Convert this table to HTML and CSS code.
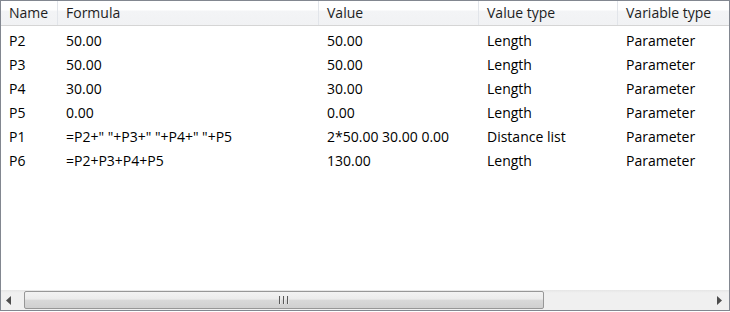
FILE: index.html
```html
<!DOCTYPE html>
<html>
<head>
<meta charset="utf-8">
<link rel="stylesheet" href="styles.css">
</head>
<body>
<div class="frame">
  <div class="grid">
    <div class="head">
      <div class="hc c1">Name</div>
      <div class="hc c2">Formula</div>
      <div class="hc c3">Value</div>
      <div class="hc c4">Value type</div>
      <div class="hc c5">Variable type</div>
    </div>
    <div class="rows">
      <div class="row"><div class="c1">P2</div><div class="c2">50.00</div><div class="c3">50.00</div><div class="c4">Length</div><div class="c5">Parameter</div></div>
      <div class="row"><div class="c1">P3</div><div class="c2">50.00</div><div class="c3">50.00</div><div class="c4">Length</div><div class="c5">Parameter</div></div>
      <div class="row"><div class="c1">P4</div><div class="c2">30.00</div><div class="c3">30.00</div><div class="c4">Length</div><div class="c5">Parameter</div></div>
      <div class="row"><div class="c1">P5</div><div class="c2">0.00</div><div class="c3">0.00</div><div class="c4">Length</div><div class="c5">Parameter</div></div>
      <div class="row"><div class="c1">P1</div><div class="c2">=P2+" "+P3+" "+P4+" "+P5</div><div class="c3">2*50.00 30.00 0.00</div><div class="c4">Distance list</div><div class="c5">Parameter</div></div>
      <div class="row"><div class="c1">P6</div><div class="c2">=P2+P3+P4+P5</div><div class="c3">130.00</div><div class="c4">Length</div><div class="c5">Parameter</div></div>
    </div>
  </div>
  <div class="hscroll">
    <div class="btn left"><svg width="6" height="9" viewBox="0 0 6 9"><path d="M5 0 L0 4.5 L5 9 Z" fill="#4d4d4d"/></svg></div>
    <div class="track">
      <div class="thumb">
        <div class="grip"><span></span><span></span><span></span></div>
      </div>
    </div>
    <div class="btn right"><svg width="6" height="9" viewBox="0 0 6 9"><path d="M0 0 L5 4.5 L0 9 Z" fill="#4d4d4d"/></svg></div>
  </div>
</div>
</body>
</html>
```
FILE: styles.css
```css
* { box-sizing: border-box; }
html, body { margin: 0; padding: 0; background: #fff; }
body { width: 730px; height: 312px; overflow: hidden; }
.frame {
  width: 730px;
  height: 311px;
  border: 1px solid #828790;
  display: flex;
  flex-direction: column;
  font-family: "Open Sans", "Noto Sans", sans-serif;
  font-size: 14px;
  color: #000;
}
.grid { flex: 1; display: flex; flex-direction: column; overflow: hidden; }
.head {
  display: flex;
  height: 25px;
  background: linear-gradient(#ffffff 0, #ffffff 9px, #f3f4f6 10px, #f1f2f4 100%);
  border-bottom: 1px solid #d5d5d5;
  color: #1e1e1e;
}
.hc {
  border-right: 1px solid #e2e5ea;
  padding-left: 8px;
  line-height: 24px;
  white-space: nowrap;
}
.hc.c5 { border-right: none; }
.c1 { width: 57px; flex: none; }
.c2 { width: 261px; flex: none; }
.c3 { width: 160px; flex: none; }
.c4 { width: 139px; flex: none; }
.c5 { flex: 1; }
.rows { display: flex; flex-direction: column; }
.row { display: flex; height: 24px; line-height: 24px; white-space: nowrap; }
.row > div { padding-left: 8px; }
.row:first-child { margin-top: 3px; }
.hscroll {
  height: 20px;
  display: flex;
  background: linear-gradient(#e6e6e6, #f0f0f0 3px, #f0f0f0);
  margin-bottom: 0;
}
.btn { width: 23px; flex: none; display: flex; align-items: center; justify-content: center; }
.btn.left { padding-right: 7px; }
.btn.right { width: 21px; padding-left: 2px; }
.track { flex: 1; display: flex; align-items: center; }
.thumb {
  width: 520px;
  height: 18px;
  border: 1px solid #979797;
  border-radius: 2px;
  background: linear-gradient(#f2f2f2, #ebebeb 45%, #d9d9d9 50%, #d0d0d0);
  display: flex;
  align-items: center;
  justify-content: center;
}
.grip { display: flex; gap: 2px; }
.grip span { width: 2px; height: 8px; background: linear-gradient(90deg, #5a5a5a 50%, #e8e8e8 50%); }
```
